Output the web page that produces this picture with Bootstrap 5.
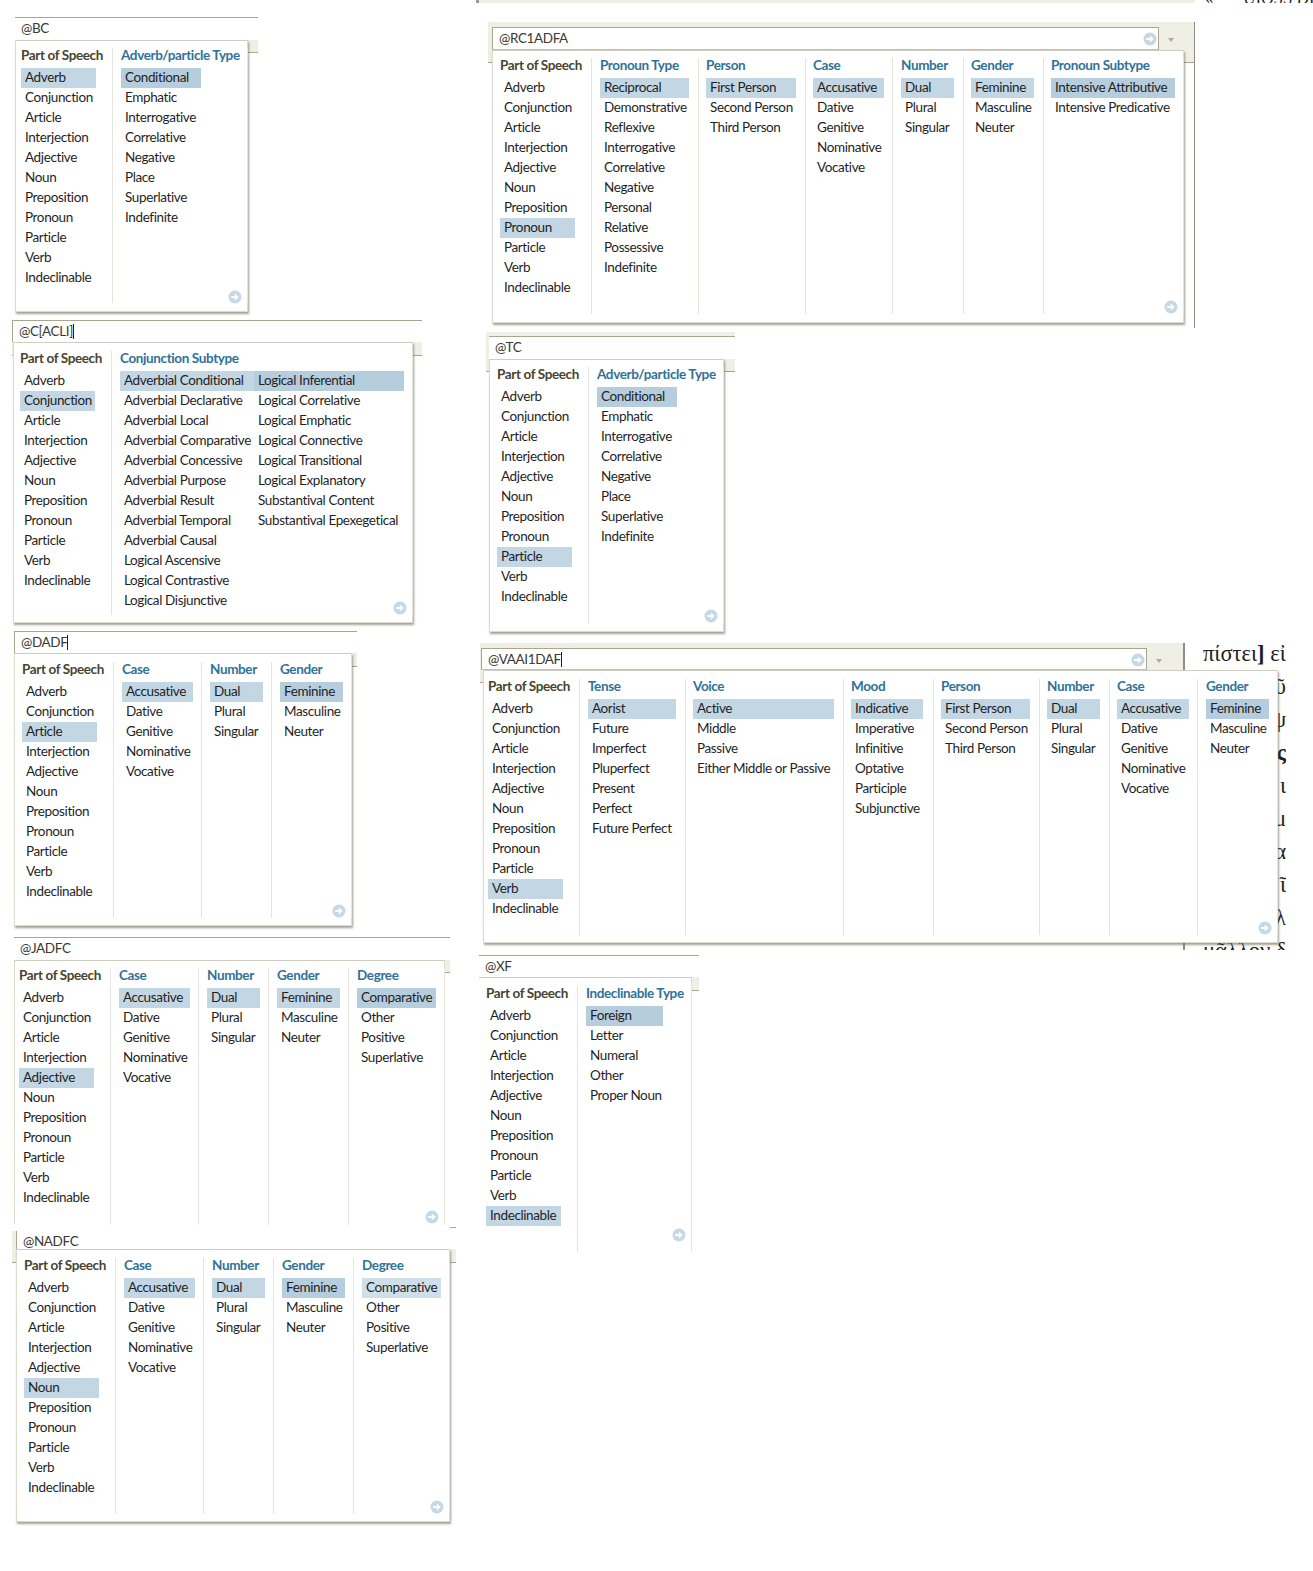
<!DOCTYPE html>
<html lang="en">
<head>
<meta charset="utf-8">
<title>Morphology picker</title>
<link href="https://cdn.jsdelivr.net/npm/bootstrap@5.3.0/dist/css/bootstrap.min.css" rel="stylesheet">
<style>
html,body{background:#fff;margin:0;}
body{position:relative;height:1571px;overflow:hidden;font-family:Lato,"Liberation Sans",sans-serif;font-size:13.5px;letter-spacing:-.38px;color:#222;}
.tool-frame{position:absolute;background:#f0efe6;border-bottom:1px solid #a9a68f;}
.tool-bar{background:#fff;border-top:1px solid #a9a68f;line-height:20px;padding-left:6px;color:#3a3a32;position:relative;font-size:13.5px;}
.tool-bar.boxed{border:1px solid #a9a68f;border-bottom-color:#c4c2b0;}
.tool-bar.lefted{border-left:1px solid #a9a68f;}
.tool-bar.nobar{border-top:0;}
.caret-bar{display:inline-block;width:1px;height:15px;background:#222;vertical-align:-3px;}
.pop-panel{position:absolute;background:#fff;border:1px solid #dcdbd0;border-top-color:#cfcdbf;box-shadow:1px 2px 2px rgba(100,98,80,.6);border-radius:0;z-index:2;}
.pop-panel.cut{box-shadow:none;border-bottom:0;}
.pop-panel.noleft{border-left:0;}
.pop-col{border-right:1px solid #e6e5dc;margin-top:7px;box-sizing:border-box;flex:none;}
.pop-col:last-child{border-right:0;}
.pop-panel.deep .pop-col{margin-top:8px;}
.col-head{font-weight:700;line-height:14px;height:14px;margin-bottom:6px;white-space:nowrap;color:#2f7299;font-size:13.5px;}
.col-head.first{color:#48442f;}
.pick-list{margin:0;padding:0;list-style:none;flex:none;}
.pick-list li{height:20px;line-height:19px;padding-left:4px;white-space:nowrap;color:#1f1f1f;}
.pick-list li.on{background:#c3d6e4;}
.pick-list.alt li.on{background:#b6cddd;}
.pick-list.soft li.on{background:#cfdfea;}
.go-arrow{position:absolute;width:14px;height:14px;display:block;}
.drop-tri{position:absolute;width:0;height:0;border-left:3.5px solid transparent;border-right:3.5px solid transparent;border-top:4px solid #aaa;}
.deco{position:absolute;z-index:1;}
.deco-line{background:#8f8e82;}
.deco-dash{background:#a9a68f;}
.greek-wall{position:absolute;left:1203px;top:637px;width:83px;height:313px;overflow:hidden;font-family:"Liberation Serif","DejaVu Serif",serif;font-size:22.5px;line-height:33px;letter-spacing:0;color:#1c1c1c;white-space:nowrap;}
.greek-wall div{height:33px;}
.top-strip{position:absolute;left:476px;top:0;width:719px;height:3px;background:#f0efe6;border-left:3px solid #999;}
.top-text{position:absolute;left:1205px;top:-9px;height:12px;width:108px;overflow:hidden;font-family:"Liberation Serif",serif;font-size:17px;line-height:16px;letter-spacing:0;white-space:nowrap;color:#222;}
</style>
</head>
<body>
<div class="top-strip"></div>
<div class="top-text">« &nbsp;&nbsp;&nbsp;&nbsp;&nbsp;&nbsp;UIOSS DES</div>
<div class="greek-wall">
<div>πίστει<b>]</b> εἰς</div>
<div class="text-end">ῦ</div><div class="text-end">ψ</div><div class="text-end fw-bold">ς</div><div class="text-end">ι</div><div class="text-end">μ</div><div class="text-end">α</div><div class="text-end">ῖ</div><div class="text-end">λ</div>
<div>μᾶλλον δὲ</div>
</div>
<div id="stage"></div>
<script>
const POS=["Adverb","Conjunction","Article","Interjection","Adjective","Noun","Preposition","Pronoun","Particle","Verb","Indeclinable"];
const CASE=["Accusative","Dative","Genitive","Nominative","Vocative"],NUM=["Dual","Plural","Singular"],GEN=["Feminine","Masculine","Neuter"],DEG=["Comparative","Other","Positive","Superlative"],ADV=["Conditional","Emphatic","Interrogative","Correlative","Negative","Place","Superlative","Indefinite"],PER=["First Person","Second Person","Third Person"];
const W=[
{text:"@BC",frame:[15,17,243,36],bar:[15,17,243,23],pop:[15,40,233,272],div:[112],arrow:[235,297],first:[21,0],cols:[["Adverb/particle Type",121,80,ADV,0,0,"alt"]]},
{text:"@C[ACLI]",deep:1,cur:1,frame:[12,320,410,36],bar:[12,320,410,22],barCls:"lefted",pop:[13,342,400,281],div:[111],arrow:[400,608],first:[20,1],cols:[["Conjunction Subtype",120,134,["Adverbial Conditional","Adverbial Declarative","Adverbial Local","Adverbial Comparative","Adverbial Concessive","Adverbial Purpose","Adverbial Result","Adverbial Temporal","Adverbial Causal","Logical Ascensive","Logical Contrastive","Logical Disjunctive"],150,["Logical Inferential","Logical Correlative","Logical Emphatic","Logical Connective","Logical Transitional","Logical Explanatory","Substantival Content","Substantival Epexegetical"]]]},
{text:"@DADF",deep:1,cur:1,frame:[14,631,343,36],bar:[14,631,343,22],barCls:"lefted",pop:[14,653,338,273],div:[113,201,271],arrow:[339,911],first:[22,2],cols:[["Case",122,71,CASE],["Number",210,53,NUM],["Gender",280,63,GEN,0,0,"alt"]]},
{text:"@JADFC",frame:[14,937,436,36],bar:[14,937,436,23],pop:[14,960,431,264],cut:1,div:[110,198,268,348],arrow:[432,1217],first:[19,4],cols:[["Case",119,71,CASE],["Number",207,53,NUM],["Gender",277,63,GEN],["Degree",357,79,DEG,0,0,"alt"]]},
{text:"@NADFC",deep:1,frame:[12,1231,444,32],bar:[16,1231,440,18],barCls:"lefted nobar",pop:[16,1249,434,273],div:[115,203,273,353],arrow:[437,1507],first:[24,5],cols:[["Case",124,71,CASE],["Number",212,53,NUM],["Gender",282,63,GEN,0,0,"alt"],["Degree",362,79,DEG,0,0,"soft"]]},
{text:"@RC1ADFA",frame:[488,22,706,41],bar:[492,27,667,23],barCls:"boxed",pop:[492,50,692,273],div:[591,698,805,892,963,1043],arrow:[1171,307],inArrow:[1150,39],tri:[1171,38],first:[500,7],cols:[["Pronoun Type",600,89,["Reciprocal","Demonstrative","Reflexive","Interrogative","Correlative","Negative","Personal","Relative","Possessive","Indefinite"]],["Person",706,90,PER],["Case",813,71,CASE],["Number",901,53,NUM],["Gender",971,63,GEN],["Pronoun Subtype",1051,124,["Intensive Attributive","Intensive Predicative"],0,0,"alt"]]},
{text:"@TC",frame:[486,332,249,40],bar:[489,336,246,23],pop:[489,359,235,273],div:[588],arrow:[711,616],first:[497,8],cols:[["Adverb/particle Type",597,80,ADV,0,0,"alt"]]},
{text:"@VAAI1DAF",deep:1,cur:1,frame:[480,643,703,40],bar:[481,648,666,22],barCls:"boxed",pop:[483,670,795,273],div:[579,685,843,933,1039,1109,1197],arrow:[1265,928],inArrow:[1138,660],tri:[1159,659],first:[488,9],cols:[["Tense",588,88,["Aorist","Future","Imperfect","Pluperfect","Present","Perfect","Future Perfect"]],["Voice",693,141,["Active","Middle","Passive","Either Middle or Passive"]],["Mood",851,72,["Indicative","Imperative","Infinitive","Optative","Participle","Subjunctive"]],["Person",941,89,PER],["Number",1047,53,NUM],["Case",1117,72,CASE],["Gender",1206,63,GEN,0,0,"alt"]]},
{text:"@XF",deep:1,frame:[479,955,220,36],bar:[479,955,220,22],pop:[479,977,213,273],cut:1,noleft:1,div:[577],arrow:[679,1235],first:[486,10],cols:[["Indeclinable Type",586,77,["Foreign","Letter","Numeral","Other","Proper Noun"],0,0,"alt"]]}
];
const ARROW='<circle cx="7" cy="7" r="6.5" fill="#c5d8e6"/><path d="M3.2 6h3.6V3.6L10.8 7 6.8 10.4V8H3.2z" fill="#fff"/>';
function list(items,w,a,tone){return `<ul class="pick-list ${tone||""}" style="width:${w}px">`+items.map((t,i)=>`<li class="${i===a?"on":""}">${t}</li>`).join("")+"</ul>";}
let html="";
W.forEach(d=>{
 const [fx,fy,fw,fh]=d.frame,[bx,by,bw,bh]=d.bar,[px0,py0,pw,ph]=d.pop;
 html+=`<section class="position-absolute" style="left:${fx}px;top:${fy}px;width:${fw}px;height:${fh}px">`;
 html+=`<div class="tool-frame" style="left:0;top:0;width:${fw}px;height:${fh}px"></div>`;
 html+=`<div class="tool-bar ${d.barCls||""}" style="position:absolute;left:${bx-fx}px;top:${by-fy}px;width:${bw}px;height:${bh}px">${d.text}${d.cur?'<span class="caret-bar"></span>':""}</div>`;
 if(d.inArrow)html+=`<svg class="go-arrow" viewBox="0 0 14 14" style="left:${d.inArrow[0]-7-fx}px;top:${d.inArrow[1]-7-fy}px">${ARROW}</svg>`;
 if(d.tri)html+=`<span class="drop-tri" style="left:${d.tri[0]-3-fx}px;top:${d.tri[1]-fy}px"></span>`;
 html+=`<div class="pop-panel d-flex ${d.cut?"cut":""} ${d.noleft?"noleft":""} ${d.deep?"deep":""}" style="left:${px0-fx}px;top:${py0-fy}px;width:${pw}px;height:${ph}px">`;
 const lb=d.noleft?0:1, innerL=px0+lb, edges=[innerL].concat(d.div).concat([px0+pw-1]);
 const colH=ph-(d.cut?7:17);
 const fc=d.first[0]-innerL;
 html+=`<div class="pop-col" style="width:${edges[1]+1-edges[0]}px;height:${colH}px;padding-left:${fc}px"><div class="col-head first">Part of Speech</div>${list(POS,75,d.first[1])}</div>`;
 d.cols.forEach((c,i)=>{
  const l=edges[i+1]+1,r=edges[i+2]+1;
  const pad=c[1]-l;
  html+=`<div class="pop-col" style="width:${r-l}px;height:${colH}px;padding-left:${pad}px"><div class="col-head">${c[0]}</div><div class="d-flex">${list(c[3],c[2],0,c[6])}${c[4]?list(c[5],c[4],0,"alt"):""}</div></div>`;
 });
 html+=`<svg class="go-arrow" viewBox="0 0 14 14" style="left:${d.arrow[0]-7-px0-lb}px;top:${d.arrow[1]-7-py0-1}px">${ARROW}</svg></div></section>`;
});
document.getElementById("stage").innerHTML=html;
</script>
<div class="deco deco-line" style="left:1194px;top:22px;width:1px;height:306px"></div>
<div class="deco deco-line" style="left:1183px;top:643px;width:2px;height:40px"></div>
<div class="deco deco-line" style="left:1183px;top:943px;width:2px;height:7px"></div>
<div class="deco deco-dash" style="left:450px;top:1227px;width:6px;height:1px"></div>
<script src="https://cdn.jsdelivr.net/npm/bootstrap@5.3.0/dist/js/bootstrap.bundle.min.js"></script>
</body>
</html>
